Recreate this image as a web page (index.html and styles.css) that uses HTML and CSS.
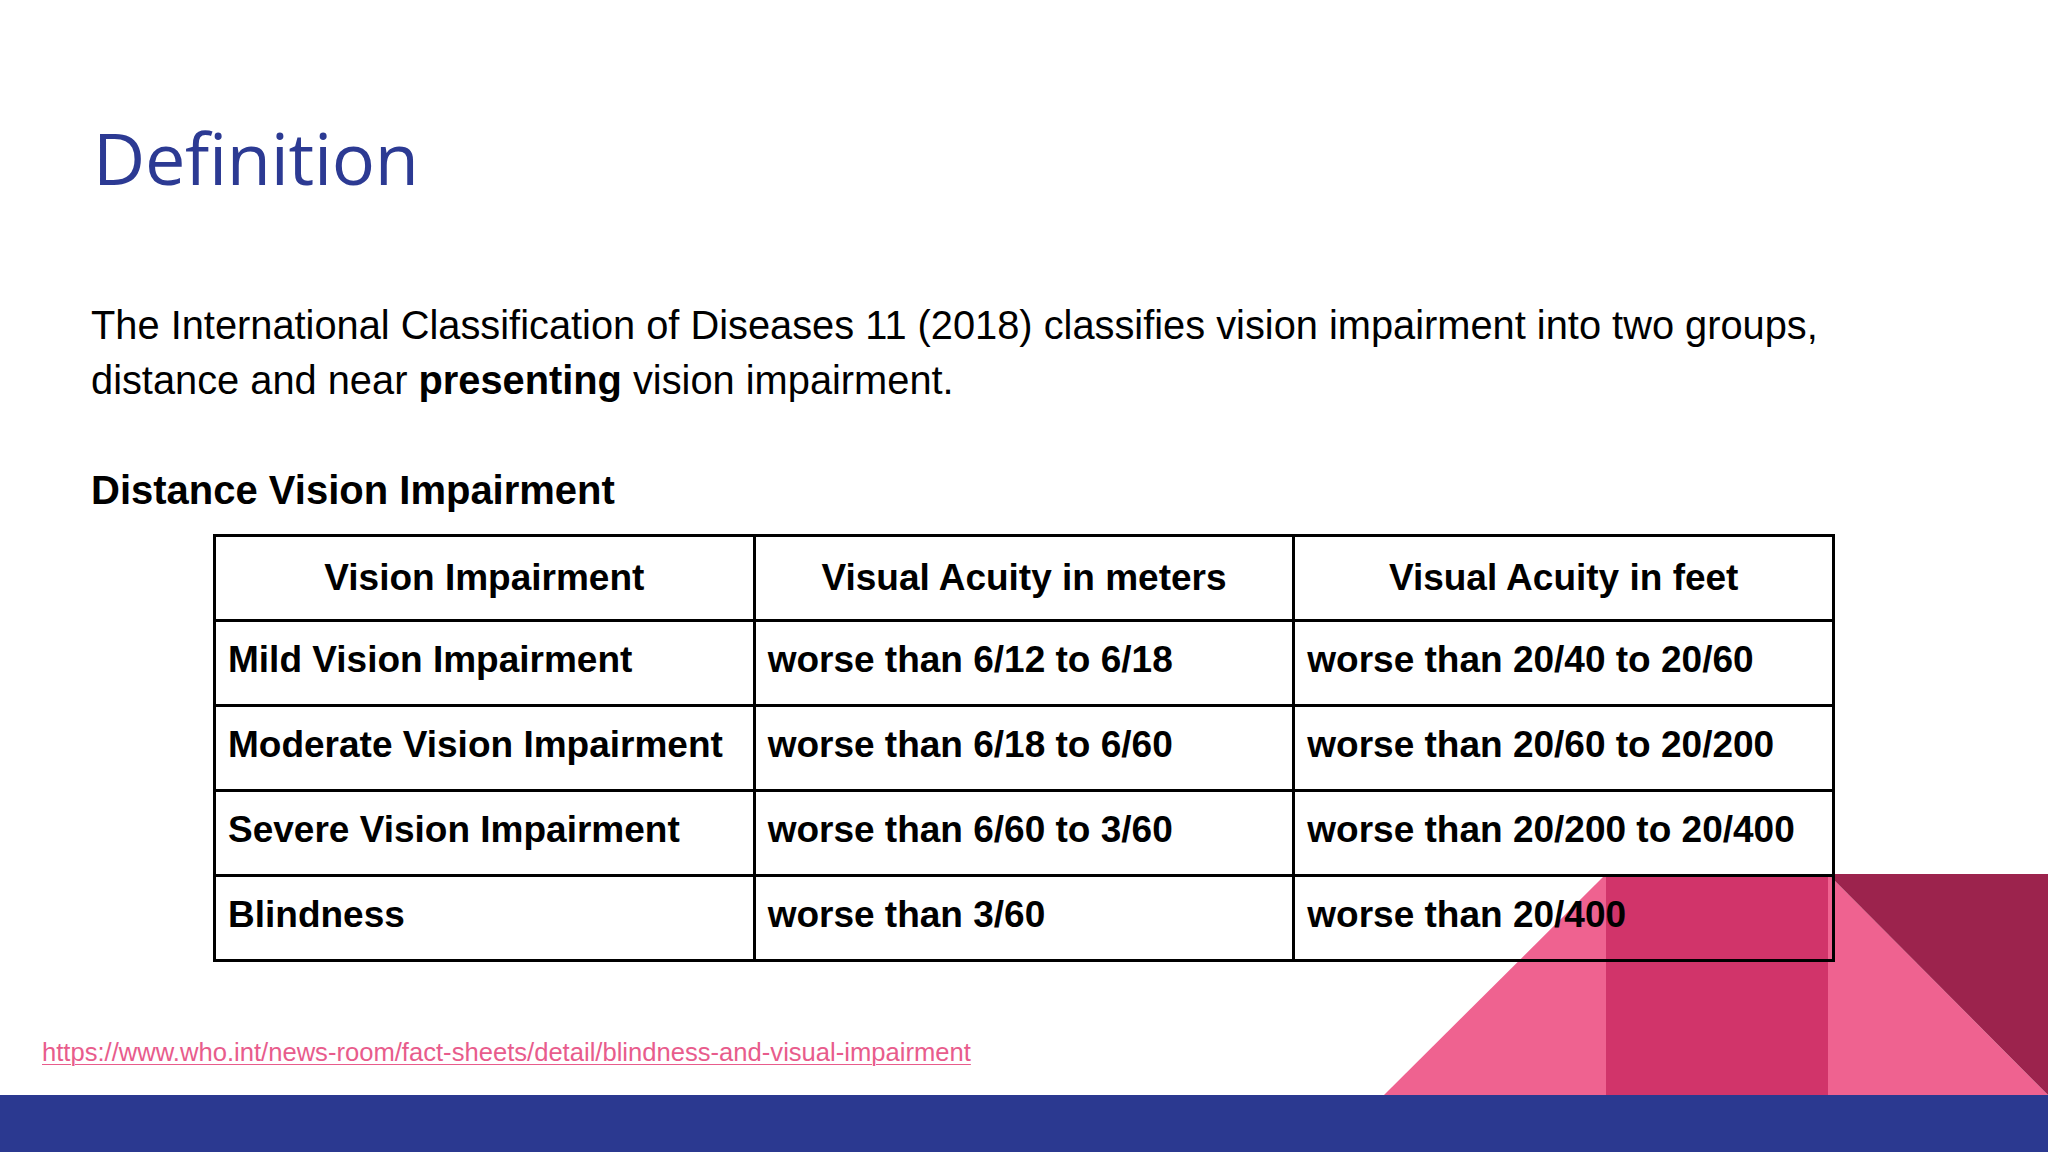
FILE: index.html
```html
<!DOCTYPE html>
<html lang="en">
<head>
<meta charset="utf-8">
<title>Definition</title>
<link rel="stylesheet" href="styles.css">
</head>
<body>
<div class="slide">
  <svg class="decor" width="664" height="221" viewBox="0 0 664 221" aria-hidden="true">
    <polygon points="0,221 222,0 222,221" fill="#ef6290"/>
    <rect x="222" y="0" width="222" height="221" fill="#d1346a"/>
    <polygon points="444,0 444,221 664,221" fill="#ef6290"/>
    <polygon points="444,0 664,0 664,221" fill="#9c234d"/>
  </svg>
  <main class="content">
    <h1 class="title">Definition</h1>
    <p class="intro">The International Classification of Diseases 11 (2018) classifies vision impairment into two groups, distance and near <b>presenting</b> vision impairment.</p>
    <h2 class="subhead">Distance Vision Impairment</h2>
    <table class="grid">
      <thead>
        <tr><th>Vision Impairment</th><th>Visual Acuity in meters</th><th>Visual Acuity in feet</th></tr>
      </thead>
      <tbody>
        <tr><td>Mild Vision Impairment</td><td>worse than 6/12 to 6/18</td><td>worse than 20/40 to 20/60</td></tr>
        <tr><td>Moderate Vision Impairment</td><td>worse than 6/18 to 6/60</td><td>worse than 20/60 to 20/200</td></tr>
        <tr><td>Severe Vision Impairment</td><td>worse than 6/60 to 3/60</td><td>worse than 20/200 to 20/400</td></tr>
        <tr><td>Blindness</td><td>worse than 3/60</td><td>worse than 20/400</td></tr>
      </tbody>
    </table>
    <a class="source" href="#">https://www.who.int/news-room/fact-sheets/detail/blindness-and-visual-impairment</a>
  </main>
  <footer class="bar"></footer>
</div>
</body>
</html>
```
FILE: styles.css
```css
html, body {
  margin: 0;
  padding: 0;
  background: #ffffff;
}

.slide {
  position: relative;
  width: 2048px;
  height: 1152px;
  overflow: hidden;
  display: flex;
  flex-direction: column;
  background: #ffffff;
  font-family: "Liberation Sans", Arial, sans-serif;
  color: #000000;
}

.decor {
  position: absolute;
  left: 1384px;
  top: 874px;
  display: block;
}

.content {
  position: relative;
  flex: 1;
  display: flex;
  flex-direction: column;
  align-items: flex-start;
}

.title {
  margin: 108px 0 0 93px;
  font-family: "Open Sans", sans-serif;
  font-weight: 400;
  font-size: 72px;
  line-height: 98px;
  color: #2c3a93;
  letter-spacing: -0.3px;
}

.intro {
  margin: 92px 0 0 91px;
  width: 1860px;
  font-size: 39.8px;
  line-height: 55px;
}

.intro b {
  font-weight: 700;
}

.subhead {
  margin: 60px 0 0 91px;
  font-size: 40px;
  line-height: 44px;
  font-weight: 700;
}

.grid {
  margin: 22px 0 0 213px;
  border-collapse: collapse;
  table-layout: fixed;
  width: 1622px;
  background: transparent;
}

.grid th,
.grid td {
  border: 3px solid #000000;
  height: 80px;
  padding: 0 12px;
  font-size: 37px;
  font-weight: 700;
  text-align: left;
  vertical-align: middle;
  white-space: nowrap;
  box-sizing: border-box;
}

.grid td {
  padding-bottom: 6px;
}

.grid th {
  text-align: center;
}

.grid tr {
  height: 85px;
}

.source {
  margin: 75px 0 0 42px;
  font-size: 25.6px;
  line-height: 30px;
  color: #e85c8c;
  text-decoration: underline;
  text-decoration-thickness: 1px;
  text-underline-offset: 3px;
}

.bar {
  height: 57px;
  background: #2b3990;
  position: relative;
}
```
